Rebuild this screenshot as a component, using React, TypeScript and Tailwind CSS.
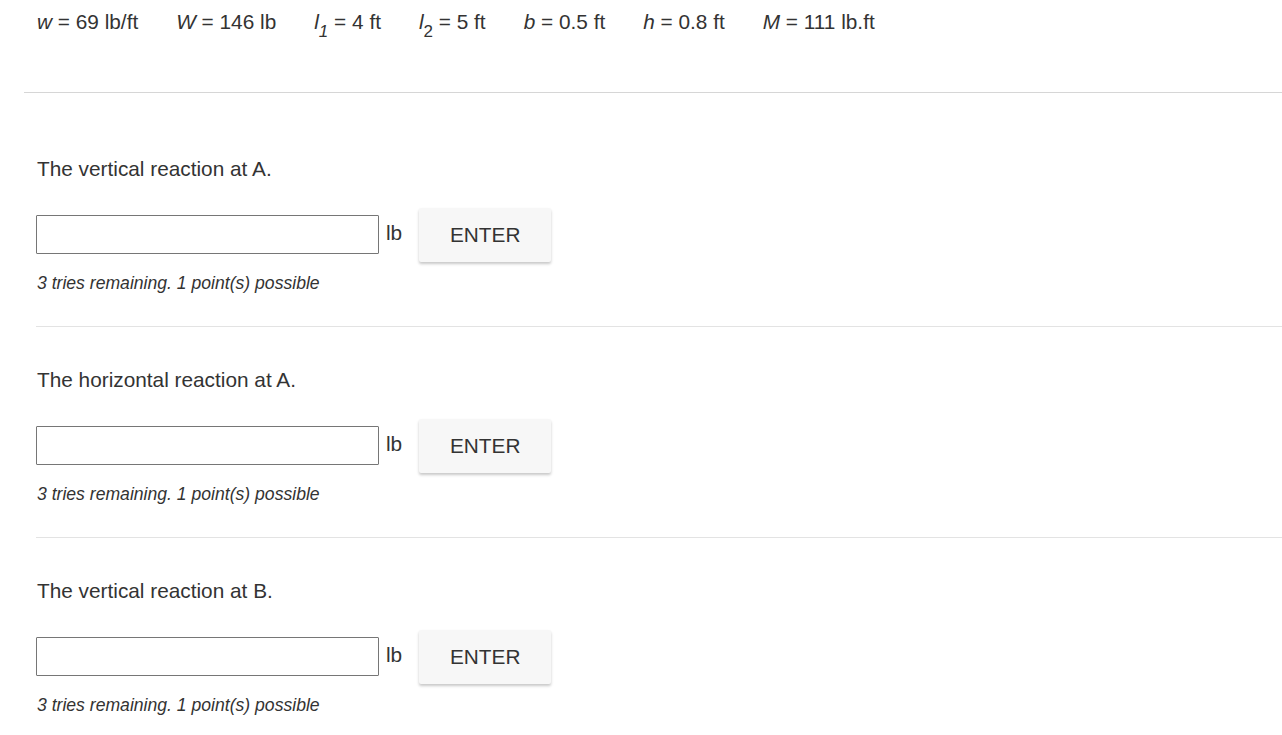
import React from "react";

const font = { fontFamily: '"Liberation Sans", Arial, sans-serif' };

function Param({ sym, sub, subItalic, rest }: { sym: string; sub?: string; subItalic?: boolean; rest: string }) {
  return (
    <span className="whitespace-nowrap">
      <i>{sym}</i>
      {sub && (
        <sub className={(subItalic ? "italic " : "") + "text-[17px] align-[-4px] leading-none"}>{sub}</sub>
      )}
      {" "}= {rest}
    </span>
  );
}

function Question({ label, first }: { label: string; first?: boolean }) {
  return (
    <div className={first ? "pt-[62px]" : "pt-[39px]"}>
      <div className="text-[20.8px] leading-[28px] pl-[1px]">{label}</div>
      <div className="flex items-center mt-[25px] h-[53px]">
        <input
          type="text"
          className="w-[343px] h-[39px] border border-[#767676] rounded-[1px] bg-white outline-none"
        />
        <span className="ml-[7px] text-[20.8px] leading-[28px] -mt-[3px]">lb</span>
        <button className="ml-[17px] w-[132px] h-[54px] bg-[#f7f7f7] text-[20.8px] text-[#333] rounded-[2px] shadow-[0_2px_3px_rgba(0,0,0,0.22)]">
          ENTER
        </button>
      </div>
      <div className="mt-[10px] text-[17.6px] italic leading-[24px] pl-[1px]">
        3 tries remaining. 1 point(s) possible
      </div>
    </div>
  );
}

export default function App() {
  return (
    <div className="w-[1282px] h-[735px] bg-white text-[#333] overflow-hidden" style={font}>
      <div className="pt-[8px] pl-[37px] flex gap-[38px] text-[20.8px] leading-[28px]">
        <Param sym="w" rest="69 lb/ft" />
        <Param sym="W" rest="146 lb" />
        <Param sym="l" sub="1" subItalic rest="4 ft" />
        <Param sym="l" sub="2" rest="5 ft" />
        <Param sym="b" rest="0.5 ft" />
        <Param sym="h" rest="0.8 ft" />
        <Param sym="M" rest="111 lb.ft" />
      </div>
      <div className="ml-[24px] mt-[56px] border-t border-[#d6d6d6]" />
      <div className="pl-[36px]">
        <Question label="The vertical reaction at A." first />
        <div className="mt-[31px] border-t border-[#e3e3e3]" />
        <Question label="The horizontal reaction at A." />
        <div className="mt-[31px] border-t border-[#e3e3e3]" />
        <Question label="The vertical reaction at B." />
      </div>
    </div>
  );
}
